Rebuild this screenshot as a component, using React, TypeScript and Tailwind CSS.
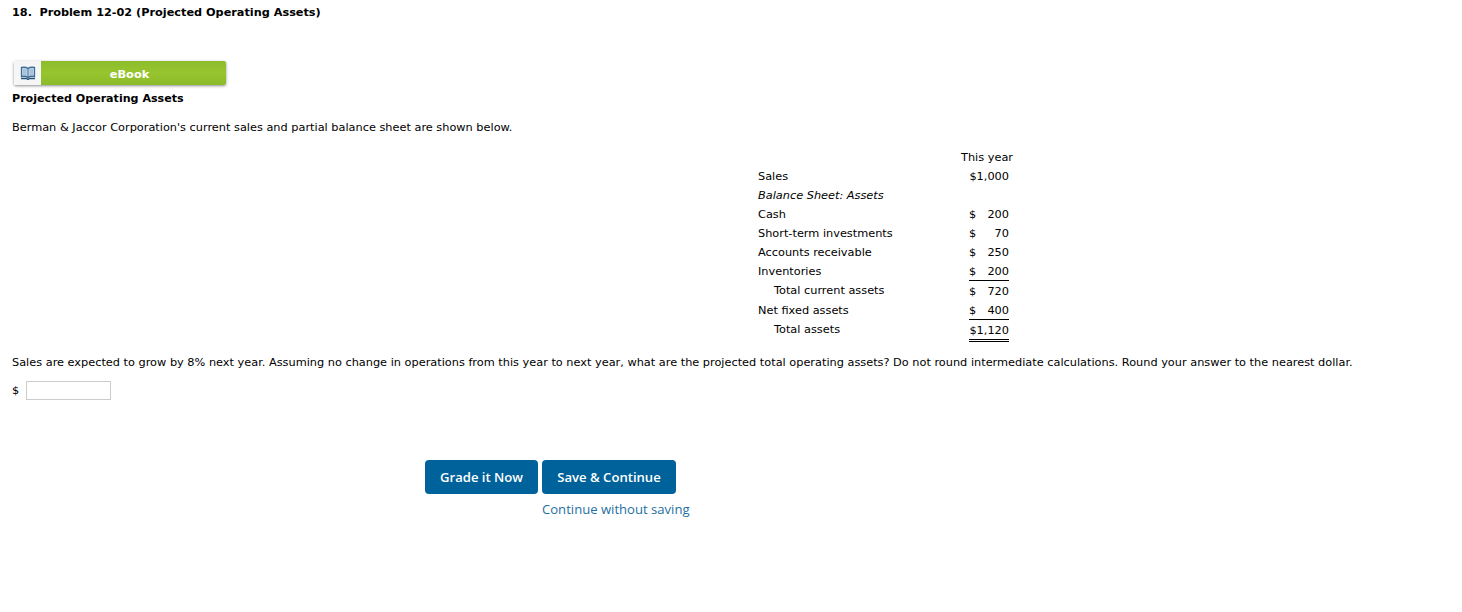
import React from 'react';

const rows = [
  { label: 'Sales', value: '$1,000', plain: true },
  { label: 'Balance Sheet: Assets', italic: true },
  { label: 'Cash', sign: '$', value: '200' },
  { label: 'Short-term investments', sign: '$', value: '70' },
  { label: 'Accounts receivable', sign: '$', value: '250' },
  { label: 'Inventories', sign: '$', value: '200', box: 'h-[19px] border-b border-black' },
  { label: 'Total current assets', sign: '$', value: '720', indent: true, box: 'h-[20px] pt-[1px]' },
  { label: 'Net fixed assets', sign: '$', value: '400', box: 'h-[19px] border-b border-black' },
  { label: 'Total assets', value: '$1,120', plain: true, indent: true, box: 'h-[22px] pt-[1px] border-b-[3px] border-double border-black' },
];

const BookIcon = () => (
  <svg viewBox="0 0 16 14" className="w-[16px] h-[14px]">
    <path d="M8 2.500C6.500 1.300 4 1 1.500 1.500v9C4 10 6.500 10.300 8 11.500c1.500-1.200 4-1.500 6.500-1V1.500C12 1 9.500 1.300 8 2.500z" fill="#c9dcec" stroke="#3d6c96" strokeWidth="1.300" />
    <path d="M8 2.500v9" stroke="#3d6c96" strokeWidth="1" />
    <path d="M3 4h3.500M3 6h3.500M3 8h3.500M9.500 4H13M9.500 6H13M9.500 8H13" stroke="#7fa4c4" strokeWidth="0.900" />
    <path d="M1 12.500h5.500l1.500 1 1.500-1H15" stroke="#24527c" strokeWidth="1.400" fill="none" />
  </svg>
);

export default function App() {
  return (
    <div className="h-[612px] bg-white text-black text-[11.32px] leading-[19px] font-['DejaVu_Sans',sans-serif] overflow-hidden">
      <div className="pl-[12px] pt-[3px]">
        <h2 className="font-bold text-[11.28px]"><span className="mr-[3.5px]">18.&nbsp;</span>Problem 12-02 (Projected Operating Assets)</h2>

        <div className="mt-[39px] ml-[2px] flex w-[212px] h-[24px] rounded-[2px] shadow-[0_1px_3px_rgba(0,0,0,0.45)]">
          <div className="w-[27px] flex items-center justify-center bg-[#f6f6f6]">
            <BookIcon />
          </div>
          <div className="flex-1 flex items-center justify-center pr-[8px] pt-[2px] rounded-r-[2px] bg-gradient-to-b from-[#8cbc2b] via-[#97c52f] to-[#8cbb2a] text-white font-bold">eBook</div>
        </div>

        <h3 className="mt-[4px] font-bold text-[11.1px]">Projected Operating Assets</h3>
        <p className="mt-[10px]">Berman &amp; Jaccor Corporation's current sales and partial balance sheet are shown below.</p>

        <table className="mt-[11px] ml-[746px] border-collapse table-fixed w-[255px]">
          <thead>
            <tr className="h-[19px]">
              <th className="w-[203px] p-0" />
              <th className="w-[52px] p-0 font-normal text-center whitespace-nowrap">This year</th>
            </tr>
          </thead>
          <tbody>
            {rows.map(r => (
              <tr key={r.label}>
                <td className={`p-0 align-top whitespace-nowrap ${r.indent ? 'pl-[16px]' : ''} ${r.italic ? 'italic' : ''}`}>{r.label}</td>
                <td className="p-0 pl-[8px] pr-[4px] align-top h-[19px]">
                  {r.value && (
                    <div className={`flex justify-between ${r.box ?? 'h-[19px]'}`}>
                      {r.plain ? (
                        <span className="ml-auto">{r.value}</span>
                      ) : (
                        <>
                          <span>{r.sign}</span>
                          <span>{r.value}</span>
                        </>
                      )}
                    </div>
                  )}
                </td>
              </tr>
            ))}
          </tbody>
        </table>

        <p className="mt-[11px]">
          Sales are expected to grow by 8% next year. Assuming no change in operations from this year to next year, what are the projected total operating assets? Do not round intermediate calculations. Round your answer to the nearest dollar.
        </p>

        <div className="mt-[9px] flex items-center gap-[7px]">
          <span>$</span>
          <input type="text" className="w-[85px] h-[19px] border border-[#cccccc] bg-white" />
        </div>
      </div>

      <div className="mt-[60px] ml-[425px] font-['Open_Sans',sans-serif]">
        <div className="flex gap-[4px]">
          <button className="w-[113px] h-[34px] rounded-[4px] bg-[#00629b] text-white text-[13.100px] font-semibold">Grade it Now</button>
          <button className="w-[134px] h-[34px] rounded-[4px] bg-[#00629b] text-white text-[13.100px] font-semibold">Save &amp; Continue</button>
        </div>
        <a className="block mt-[6px] ml-[117px] text-[13.100px] leading-[18px] text-[#1f6fa3]">Continue without saving</a>
      </div>
    </div>
  );
}
